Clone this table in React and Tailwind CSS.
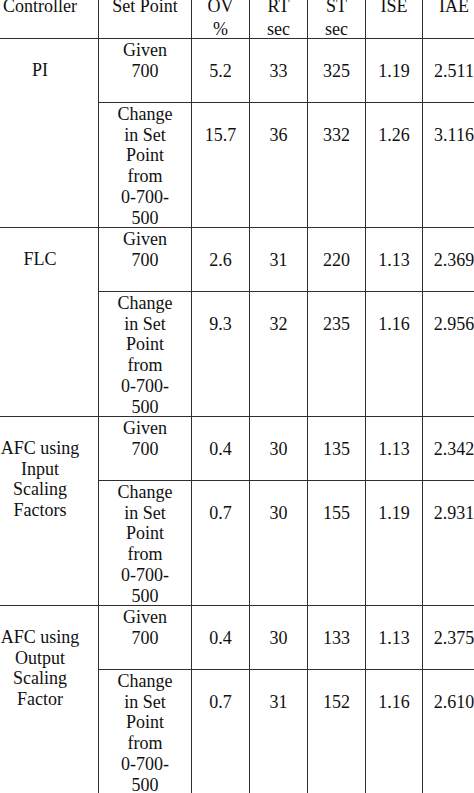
import React from "react";

const ROW_START = ["row-start-2", "row-start-3", "row-start-4", "row-start-5", "row-start-6", "row-start-7", "row-start-8", "row-start-9"];
const COL_START = ["col-start-3", "col-start-4", "col-start-5", "col-start-6", "col-start-7"];

const groups = [
  {
    name: ["PI"],
    rows: [
      ["5.2", "33", "325", "1.19", "2.511"],
      ["15.7", "36", "332", "1.26", "3.116"],
    ],
  },
  {
    name: ["FLC"],
    rows: [
      ["2.6", "31", "220", "1.13", "2.369"],
      ["9.3", "32", "235", "1.16", "2.956"],
    ],
  },
  {
    name: ["AFC using", "Input", "Scaling", "Factors"],
    rows: [
      ["0.4", "30", "135", "1.13", "2.342"],
      ["0.7", "30", "155", "1.19", "2.931"],
    ],
  },
  {
    name: ["AFC using", "Output", "Scaling", "Factor"],
    rows: [
      ["0.4", "30", "133", "1.13", "2.375"],
      ["0.7", "31", "152", "1.16", "2.610"],
    ],
  },
];

const setPoints = [
  ["Given", "700"],
  ["Change", "in Set", "Point", "from", "0-700-", "500"],
];

const header = [["Controller"], ["Set Point"], ["OV", "%"], ["RT", "sec"], ["ST", "sec"], ["ISE"], ["IAE"]];

function Lines({ lines }) {
  return lines.map((l, i) => (
    <React.Fragment key={i}>
      {i > 0 && <br />}
      {l}
    </React.Fragment>
  ));
}

export default function App() {
  return (
    <div className="w-[474px] h-[793px] overflow-hidden bg-white text-[#111] font-['Liberation_Serif','Times_New_Roman',serif]">
      <div className="grid gap-px bg-[#2e2e2e] mt-[-5px] ml-[-18px] w-[504px] text-[18px] leading-[20.7px] grid-cols-[116px_92px_57px_57px_57px_56px_62px] grid-rows-[43px_63px_124px_63px_124px_63px_124px_63px_124px]">
        {header.map((h, i) => (
          <div key={i} className="bg-white text-center leading-[23px]">
            <Lines lines={h} />
          </div>
        ))}
        {groups.map((g, gi) => (
          <React.Fragment key={gi}>
            <div className={`bg-white text-center pt-[21px] col-start-1 row-span-2 ${ROW_START[gi * 2]}`}>
              <Lines lines={g.name} />
            </div>
            {g.rows.map((r, ri) => (
              <React.Fragment key={ri}>
                <div className={`bg-white text-center pt-px col-start-2 ${ROW_START[gi * 2 + ri]}`}>
                  <Lines lines={setPoints[ri]} />
                </div>
                {r.map((v, vi) => (
                  <div key={vi} className={`bg-white text-center pt-[22px] ${COL_START[vi]} ${ROW_START[gi * 2 + ri]}`}>
                    {v}
                  </div>
                ))}
              </React.Fragment>
            ))}
          </React.Fragment>
        ))}
      </div>
    </div>
  );
}
